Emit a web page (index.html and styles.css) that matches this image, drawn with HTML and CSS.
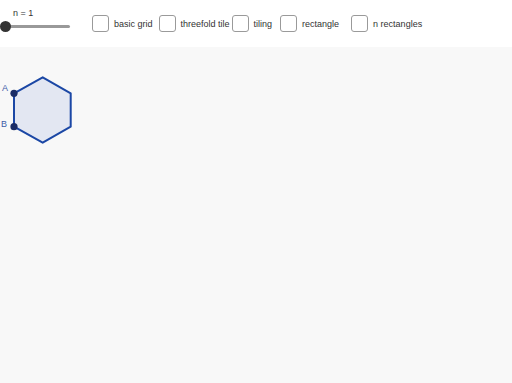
FILE: index.html
```html
<!DOCTYPE html>
<html>
<head>
<meta charset="utf-8">
<link rel="stylesheet" href="styles.css">
</head>
<body>
<div class="app">
  <div class="toolbar">
    <div class="slider">
      <div class="slider-label">n = 1</div>
      <div class="track"><div class="knob"></div></div>
    </div>
    <div class="check c1"><span class="box"></span><span class="lbl">basic grid</span></div>
    <div class="check c2"><span class="box"></span><span class="lbl">threefold tile</span></div>
    <div class="check c3"><span class="box"></span><span class="lbl">tiling</span></div>
    <div class="check c4"><span class="box"></span><span class="lbl">rectangle</span></div>
    <div class="check c5"><span class="box"></span><span class="lbl">n rectangles</span></div>
  </div>
  <div class="canvas">
    <svg class="drawing" width="512" height="336" viewBox="0 47 512 336">
      <polygon points="14,93.3 42.7,77.3 70.7,93.3 70.7,126.7 42.7,142.7 14,126.7" fill="#e3e7f2" stroke="#1b47a5" stroke-width="2" stroke-linejoin="round"/>
      <circle cx="14" cy="93.3" r="3.6" fill="#1a2c66"/>
      <circle cx="14" cy="126.7" r="3.6" fill="#1a2c66"/>
      <text x="2" y="91" class="pt">A</text>
      <text x="1" y="127" class="pt">B</text>
    </svg>
  </div>
</div>
</body>
</html>
```
FILE: styles.css
```css
html, body {
  margin: 0;
  padding: 0;
}
body {
  font-family: "Liberation Sans", Arial, sans-serif;
  width: 512px;
  height: 383px;
  overflow: hidden;
}
.app {
  display: flex;
  flex-direction: column;
  height: 383px;
}
.toolbar {
  height: 47px;
  background: #ffffff;
  display: flex;
  align-items: center;
  flex: none;
}
.slider {
  width: 80px;
  align-self: flex-start;
  padding-top: 8px;
  box-sizing: border-box;
}
.slider-label {
  font-size: 9px;
  color: #333;
  padding-left: 13px;
  line-height: 11px;
}
.track {
  position: relative;
  margin: 6px 0 0 4px;
  width: 66px;
  height: 3px;
  background: #999;
  border-radius: 2px;
}
.knob {
  position: absolute;
  left: -4px;
  top: -4px;
  width: 11px;
  height: 11px;
  border-radius: 50%;
  background: #333;
}
.check {
  display: flex;
  align-items: center;
  font-size: 9px;
  color: #333;
}
.box {
  width: 15px;
  height: 15px;
  border: 1px solid #9a9a9a;
  border-radius: 3px;
  background: #fff;
}
.lbl {
  margin-left: 5px;
}
.c1 { margin-left: 12px; }
.c2 { margin-left: 6px; }
.c3 { margin-left: 2px; }
.c4 { margin-left: 8px; }
.c5 { margin-left: 12px; }
.canvas {
  flex: 1;
  background: #f8f8f8;
  position: relative;
}
.drawing {
  display: block;
}
.pt {
  font-family: "Liberation Sans", Arial, sans-serif;
  font-size: 9px;
  fill: #3d5ca8;
}
```
